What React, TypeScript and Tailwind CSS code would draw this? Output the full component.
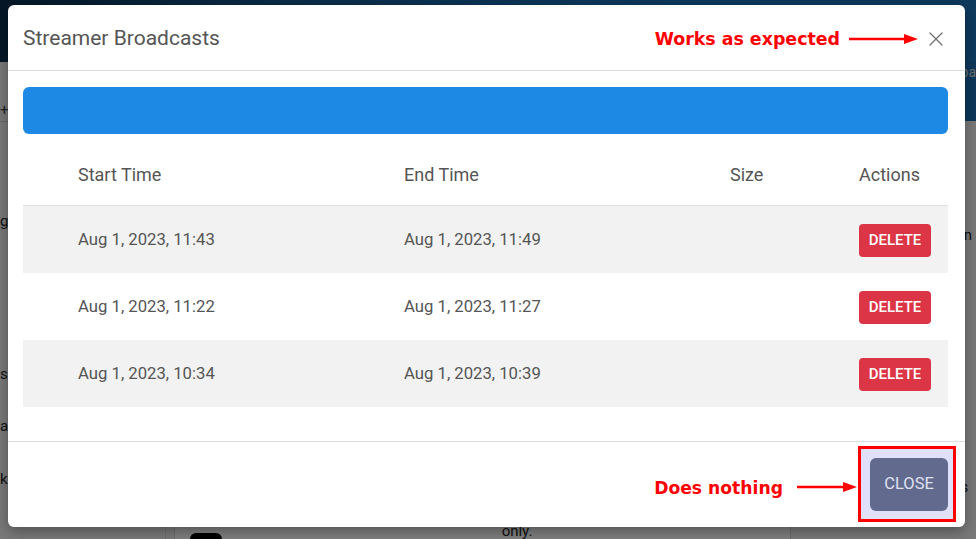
import { X } from 'lucide-react'

const broadcasts = [
  { start: 'Aug 1, 2023, 11:43', end: 'Aug 1, 2023, 11:49' },
  { start: 'Aug 1, 2023, 11:22', end: 'Aug 1, 2023, 11:27' },
  { start: 'Aug 1, 2023, 10:34', end: 'Aug 1, 2023, 10:39' },
]

const cols = 'grid grid-cols-[40px_326px_326px_129px_104px]'

function Arrow({ width }: { width: number }) {
  return (
    <svg width={width} height="12" viewBox={`0 0 ${width} 12`}>
      <line x1="0" y1="6" x2={width - 12} y2="6" stroke="#f00" strokeWidth="2.5" />
      <polygon points={`${width - 14},1 ${width},6 ${width - 14},11`} fill="#f00" />
    </svg>
  )
}

function BackgroundPage() {
  return (
    <div className="flex h-full w-full flex-col bg-[#f2f2f2] font-['Roboto',sans-serif] text-[#222]">
      {/* Top banner */}
      <div className="h-[62px] shrink-0 bg-[linear-gradient(100deg,#0a2f4d_0%,#145a93_30%,#1a6fb5_60%,#1b74bd_100%)]" />
      <div className="flex flex-1">
        {/* Left column */}
        <div className="flex w-[167px] flex-col border-r border-[#dcdcdc] pt-[40px] text-[15px]">
          <div className="flex h-[20px] items-center border-b border-[#cfcfcf] pb-[2px] text-[#444]">+</div>
          <div className="mt-[88px]">g</div>
          <div className="mt-[130px]">s</div>
          <div className="mt-[30px]">a</div>
          <div className="mt-[30px]">k</div>
        </div>
        {/* Center card */}
        <div className="ml-[8px] flex w-[622px] flex-col justify-end border-x border-[#d6d6d6] bg-white">
          <div className="flex items-end gap-[280px] pl-[15px]">
            <div className="h-[6px] w-[32px] rounded-t-md bg-black" />
            <div className="text-[15px] leading-none">only.</div>
          </div>
        </div>
        {/* Right column */}
        <div className="flex flex-1 flex-col">
          <div className="h-[59px] bg-[#1a6fb5] pl-[170px] text-[14px] text-[#ddd]">ba</div>
          <div className="pl-[165px] pt-[70px] text-[15px]">
            <div className="text-[#b0146e]">e</div>
            <div className="mt-[10px]">hn</div>
            <div className="mt-[230px]">ts</div>
          </div>
        </div>
      </div>
    </div>
  )
}

export default function App() {
  return (
    <div className="relative h-[539px] w-[976px] overflow-hidden">
      <BackgroundPage />

      {/* Backdrop + modal */}
      <div className="absolute inset-0 bg-black/50 pl-[8px] pt-[5px]">
        <div className="flex w-[957px] flex-col rounded-[6px] bg-white font-['Roboto',sans-serif] text-[#555] shadow-[0_4px_14px_rgba(0,0,0,0.35)]">
          {/* Header */}
          <div className="flex h-[66px] items-center justify-between border-b border-[#dedede] pl-[15px] pr-[17px]">
            <h2 className="pt-[3px] text-[21px] font-normal text-[#555]">Streamer Broadcasts</h2>
            <div className="flex items-center pt-[3px]">
              <span className="font-['DejaVu_Sans',sans-serif] text-[17.4px] font-bold text-[#f00]">
                Works as expected
              </span>
              <span className="ml-[9px] mr-[6px] flex">
                <Arrow width={69} />
              </span>
              <button className="flex h-[24px] w-[24px] items-center justify-center text-[#707070]">
                <X size={34} strokeWidth={1.3} />
              </button>
            </div>
          </div>

          {/* Body */}
          <div className="pb-[34px] pl-[15px] pr-[17px] pt-[16px]">
            <div className="h-[47px] rounded-[6px] bg-[#1e88e5]" />

            <div className={`${cols} h-[72px] items-center border-b border-[#e0e0e0] pt-[10px] text-[18px]`}>
              <div />
              <div className="pl-[15px]">Start Time</div>
              <div className="pl-[15px]">End Time</div>
              <div className="pl-[15px]">Size</div>
              <div className="pl-[15px]">Actions</div>
            </div>

            {broadcasts.map((b, i) => (
              <div
                key={b.start}
                className={`${cols} h-[67px] items-center text-[16.7px] ${i % 2 === 0 ? 'bg-[#f2f2f2]' : 'bg-white'}`}
              >
                <div />
                <div className="pl-[15px]">{b.start}</div>
                <div className="pl-[15px]">{b.end}</div>
                <div className="pl-[15px]" />
                <div className="pl-[15px] pt-[2px]">
                  <button className="h-[33px] w-[72px] rounded-[4px] bg-[#dc3545] text-[15px] font-medium uppercase text-white">
                    Delete
                  </button>
                </div>
              </div>
            ))}
          </div>

          {/* Footer */}
          <div className="flex items-center justify-end border-t border-[#dedede] py-[16px] pr-[17px]">
            <span className="pt-[8px] font-['DejaVu_Sans',sans-serif] text-[17.2px] font-bold text-[#f00]">Does nothing</span>
            <span className="ml-[14px] mr-[13px] flex pt-[5px]">
              <Arrow width={60} />
            </span>
            <div className="relative isolate">
              <div className="absolute -bottom-[11px] -left-[12px] -right-[8px] -top-[12px] -z-10 border-[3px] border-[#f00] bg-[#e1e0fb]" />
              <button className="h-[53px] w-[78px] rounded-[6px] bg-[#626a8e] text-[16.5px] uppercase text-[#dfe1f3]">
                Close
              </button>
            </div>
          </div>
        </div>
      </div>
    </div>
  )
}
